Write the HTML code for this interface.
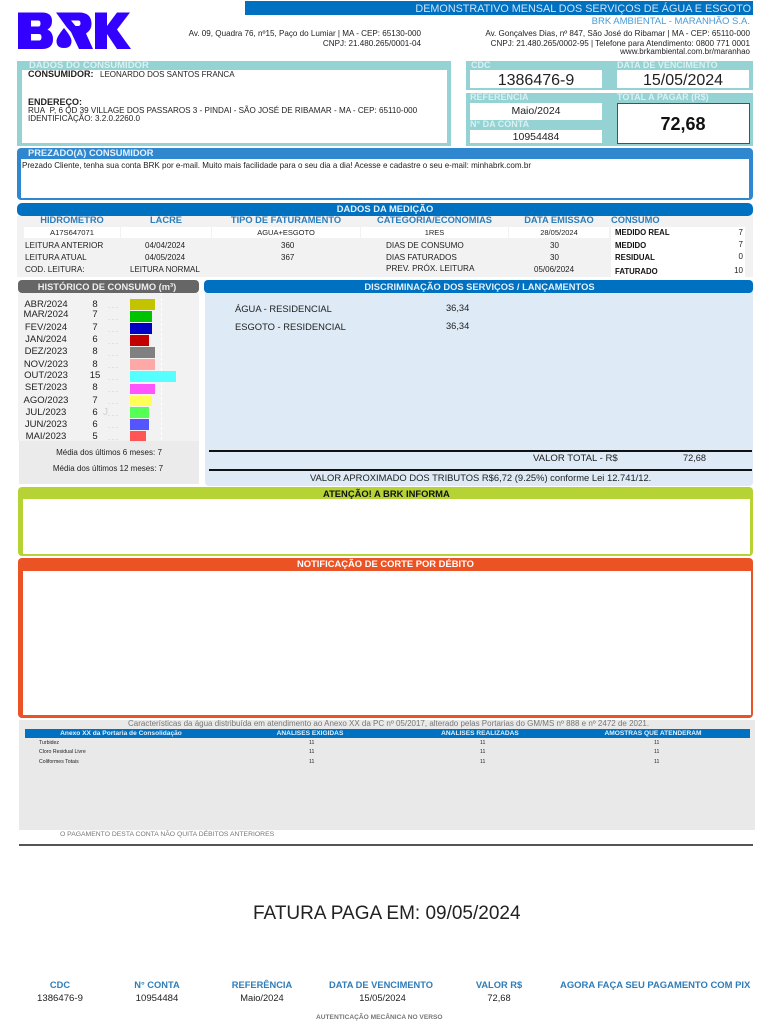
<!DOCTYPE html>
<html><head><meta charset="utf-8"><style>
html,body{margin:0;padding:0;background:#fff}
#p{position:relative;width:768px;height:1024px;overflow:hidden;font-family:"Liberation Sans",Arial,sans-serif;color:#222}
#p div{position:absolute}
.t{white-space:nowrap;line-height:1}
.r{text-align:right}
.c{text-align:center}
.b{font-weight:bold}
.lb{color:#d8f1f1;font-weight:bold}
.h{color:#2e7cb8;font-weight:bold}
.d{left:108px;font-size:7px;letter-spacing:2px;color:#b0b0b0}
</style></head><body><div id="p">
<svg style="position:absolute;left:0;top:0" width="140" height="56" viewBox="0 0 140 56">
<path fill="#3300ff" fill-rule="evenodd" d="M18 12.500H42Q52 12.500 52 21Q52 27 47.500 29.500Q53 32 53 39Q53 49 42 49H18ZM31 20.500V26.500H38.500Q40.500 26.500 40.500 23.500Q40.500 20.500 38.500 20.500ZM31 34V40.500H39Q41.500 40.500 41.500 37.200Q41.500 34 39 34Z"/>
<path fill="#3300ff" fill-rule="evenodd" d="M56 12.500H79Q91.500 12.500 91.500 24Q91.500 30 86 33.500L93 49H79L71 32L66.500 27ZM71 20.500L75.500 26H78Q80.500 26 80.500 23.200Q80.500 20.500 78 20.500Z"/>
<path fill="#3300ff" d="M64 28Q71.500 37 71.500 41Q71.500 48 64 48Q56.500 48 56.500 41Q56.500 37 64 28Z"/>
<path fill="#3300ff" d="M95 12.500H107V26L117 12.500H130L117 29.500L131 49H117L107 34V49H95Z"/>
</svg>

<div style="left:245px;top:1px;width:508px;height:14px;background:#0070c0"></div>
<div class="t r" style="right:17px;top:3.500px;font-size:10.800px;color:#cfe3f5">DEMONSTRATIVO MENSAL DOS SERVIÇOS DE ÁGUA E ESGOTO</div>
<div class="t r" style="right:18px;top:16.500px;font-size:9.500px;color:#4a9bd8">BRK AMBIENTAL - MARANHÃO S.A.</div>
<div class="t r" style="right:347px;top:29.500px;font-size:8.100px">Av. 09, Quadra 76, nº15, Paço do Lumiar | MA - CEP: 65130-000</div>
<div class="t r" style="right:347px;top:39.500px;font-size:8.100px">CNPJ: 21.480.265/0001-04</div>
<div class="t r" style="right:18px;top:29.500px;font-size:8.100px">Av. Gonçalves Dias, nº 847, São José do Ribamar | MA - CEP: 65110-000</div>
<div class="t r" style="right:18px;top:39.500px;font-size:8.100px">CNPJ: 21.480.265/0002-95 | Telefone para Atendimento: 0800 771 0001</div>
<div class="t r" style="right:18px;top:47.500px;font-size:8px">www.brkambiental.com.br/maranhao</div>

<div style="left:17px;top:61px;width:434px;height:85px;background:#95d2d4"></div>
<div style="left:22px;top:70px;width:425px;height:73px;background:#fff"></div>
<div class="t lb" style="left:29px;top:61px;font-size:9.500px">DADOS DO CONSUMIDOR</div>
<div class="t b" style="left:28px;top:69.500px;font-size:9px">CONSUMIDOR:</div>
<div class="t" style="left:100px;top:70.500px;font-size:8px">LEONARDO DOS SANTOS FRANCA</div>
<div class="t b" style="left:28px;top:97.500px;font-size:9px">ENDEREÇO:</div>
<div class="t" style="left:28px;top:106.500px;font-size:8.100px">RUA&nbsp; P, 6 QD 39 VILLAGE DOS PASSAROS 3 - PINDAI - SÃO JOSÉ DE RIBAMAR - MA - CEP: 65110-000</div>
<div class="t" style="left:28px;top:115px;font-size:8.100px">IDENTIFICAÇÃO: 3.2.0.2260.0</div>

<div style="left:466px;top:61px;width:287px;height:29px;background:#95d2d4"></div>
<div style="left:470px;top:70px;width:132px;height:18px;background:#fff"></div>
<div style="left:617px;top:70px;width:132px;height:18px;background:#fff"></div>
<div class="t lb" style="left:471px;top:61px;font-size:9px">CDC</div>
<div class="t lb" style="left:617px;top:61px;font-size:9px">DATA DE VENCIMENTO</div>
<div class="t c" style="left:470px;top:72.500px;width:132px;font-size:16px">1386476-9</div>
<div class="t c" style="left:617px;top:72.500px;width:132px;font-size:16px">15/05/2024</div>

<div style="left:466px;top:93px;width:287px;height:53px;background:#95d2d4"></div>
<div style="left:470px;top:103px;width:132px;height:17px;background:#fff"></div>
<div style="left:470px;top:130px;width:132px;height:13px;background:#fff"></div>
<div style="left:617px;top:103px;background:#fff;border:1px solid #a52a2a;box-sizing:border-box;width:133px;height:41px"></div>
<div class="t lb" style="left:470px;top:93px;font-size:9px">REFERENCIA</div>
<div class="t lb" style="left:617px;top:93px;font-size:9px">TOTAL A PAGAR (R$)</div>
<div class="t lb" style="left:470px;top:120px;font-size:9px">N° DA CONTA</div>
<div class="t c" style="left:470px;top:106px;width:132px;font-size:10.500px">Maio/2024</div>
<div class="t c" style="left:470px;top:131.500px;width:132px;font-size:10.500px">10954484</div>
<div class="t c b" style="left:617px;top:115px;width:132px;font-size:18px;color:#111">72,68</div>

<div style="left:17px;top:148px;width:736px;height:52px;background:#2f88cf;border-radius:4px"></div>
<div style="left:21px;top:159px;width:728px;height:39px;background:#fff"></div>
<div class="t b" style="left:28px;top:149px;font-size:9.300px;color:#e4f1fb">PREZADO(A) CONSUMIDOR</div>
<div class="t" style="left:22px;top:161.500px;font-size:8.050px">Prezado Cliente, tenha sua conta BRK por e-mail. Muito mais facilidade para o seu dia a dia! Acesse e cadastre o seu e-mail: minhabrk.com.br</div>

<div style="left:17px;top:216px;width:736px;height:61px;background:#f2f2f2"></div>
<div style="left:17px;top:203px;width:736px;height:13px;background:#0070c0;border-radius:5px"></div>
<div class="t b c" style="left:17px;top:204px;width:736px;font-size:9.400px;color:#e4f1fb">DADOS DA MEDIÇÃO</div>
<div class="t h c" style="left:24px;top:216px;width:96px;font-size:9.300px">HIDRÔMETRO</div>
<div class="t h c" style="left:121px;top:216px;width:90px;font-size:9.300px">LACRE</div>
<div class="t h c" style="left:212px;top:216px;width:148px;font-size:9.300px">TIPO DE FATURAMENTO</div>
<div class="t h c" style="left:361px;top:216px;width:147px;font-size:9.300px">CATEGORIA/ECONOMIAS</div>
<div class="t h c" style="left:509px;top:216px;width:100px;font-size:9.300px">DATA EMISSÃO</div>
<div class="t h" style="left:611px;top:216px;font-size:9.300px">CONSUMO</div>
<div style="left:24px;top:227px;width:96px;height:11px;background:#fff"></div>
<div style="left:121px;top:227px;width:90px;height:11px;background:#fff"></div>
<div style="left:212px;top:227px;width:148px;height:11px;background:#fff"></div>
<div style="left:361px;top:227px;width:147px;height:11px;background:#fff"></div>
<div style="left:509px;top:227px;width:100px;height:11px;background:#fff"></div>
<div style="left:611px;top:227px;width:134px;height:50px;background:#fff"></div>
<div class="t c" style="left:24px;top:229px;width:96px;font-size:7.600px">A17S647071</div>
<div class="t c" style="left:212px;top:229px;width:148px;font-size:7.500px">AGUA+ESGOTO</div>
<div class="t c" style="left:361px;top:229px;width:147px;font-size:7.500px">1RES</div>
<div class="t c" style="left:509px;top:229px;width:100px;font-size:7.500px">28/05/2024</div>
<div class="t" style="left:25px;top:242px;font-size:8.200px">LEITURA ANTERIOR</div>
<div class="t" style="left:25px;top:254px;font-size:8.200px">LEITURA ATUAL</div>
<div class="t" style="left:25px;top:266px;font-size:8.200px">COD. LEITURA:</div>
<div class="t" style="left:145px;top:242px;font-size:8px">04/04/2024</div>
<div class="t" style="left:145px;top:254px;font-size:8px">04/05/2024</div>
<div class="t" style="left:130px;top:266px;font-size:8px">LEITURA NORMAL</div>
<div class="t" style="left:281px;top:242px;font-size:8px">360</div>
<div class="t" style="left:281px;top:254px;font-size:8px">367</div>
<div class="t" style="left:386px;top:242px;font-size:8.200px">DIAS DE CONSUMO</div>
<div class="t" style="left:386px;top:254px;font-size:8.200px">DIAS FATURADOS</div>
<div class="t" style="left:386px;top:265px;font-size:8.200px">PREV. PRÓX. LEITURA</div>
<div class="t" style="left:550px;top:242px;font-size:8px">30</div>
<div class="t" style="left:550px;top:254px;font-size:8px">30</div>
<div class="t" style="left:534px;top:266px;font-size:8px">05/06/2024</div>
<div class="t b" style="left:615px;top:229px;font-size:7.800px;color:#111">MEDIDO REAL</div>
<div class="t b" style="left:615px;top:242px;font-size:7.800px;color:#111">MEDIDO</div>
<div class="t b" style="left:615px;top:254px;font-size:7.800px;color:#111">RESIDUAL</div>
<div class="t b" style="left:615px;top:268px;font-size:7.800px;color:#111">FATURADO</div>
<div class="t r" style="right:25px;top:229px;font-size:8px">7</div>
<div class="t r" style="right:25px;top:241px;font-size:8px">7</div>
<div class="t r" style="right:25px;top:253px;font-size:8px">0</div>
<div class="t r" style="right:25px;top:267px;font-size:8px">10</div>

<div style="left:18px;top:293px;width:181px;height:148px;background:#f2f2f2"></div>
<div style="left:18px;top:280px;width:181px;height:13px;background:#666;border-radius:4px"></div>
<div class="t b c" style="left:18px;top:282.500px;width:178px;font-size:9.300px;color:#eee">HISTÓRICO DE CONSUMO (m³)</div>
<div style="left:161px;top:293px;height:147px;border-left:1px dashed #fff"></div>
<div style="left:19px;top:441px;width:180px;height:43px;background:#ebebeb"></div>
<div class="t c" style="left:19px;top:449px;width:180px;font-size:8px">Média dos últimos 6 meses: 7</div>
<div class="t c" style="left:18px;top:465px;width:180px;font-size:8px">Média dos últimos 12 meses: 7</div>

<div class="t c" style="left:20px;top:300px;width:52px;font-size:9.500px">ABR/2024</div><div class="t c" style="left:85px;top:300px;width:20px;font-size:9.500px">8</div><div class="t d" style="top:303px">...</div><div style="left:130px;top:299px;width:25px;height:11px;background:#c3c300"></div>
<div class="t c" style="left:20px;top:310px;width:52px;font-size:9.500px">MAR/2024</div><div class="t c" style="left:85px;top:310px;width:20px;font-size:9.500px">7</div><div class="t d" style="top:315px">...</div><div style="left:130px;top:311px;width:22px;height:11px;background:#00c300"></div>
<div class="t c" style="left:20px;top:323px;width:52px;font-size:9.500px">FEV/2024</div><div class="t c" style="left:85px;top:323px;width:20px;font-size:9.500px">7</div><div class="t d" style="top:327px">...</div><div style="left:130px;top:323px;width:22px;height:11px;background:#0000c3"></div>
<div class="t c" style="left:20px;top:335px;width:52px;font-size:9.500px">JAN/2024</div><div class="t c" style="left:85px;top:335px;width:20px;font-size:9.500px">6</div><div class="t d" style="top:339px">...</div><div style="left:130px;top:335px;width:19px;height:11px;background:#c30000"></div>
<div class="t c" style="left:20px;top:347px;width:52px;font-size:9.500px">DEZ/2023</div><div class="t c" style="left:85px;top:347px;width:20px;font-size:9.500px">8</div><div class="t d" style="top:351px">...</div><div style="left:130px;top:347px;width:25px;height:11px;background:#808080"></div>
<div class="t c" style="left:20px;top:360px;width:52px;font-size:9.500px">NOV/2023</div><div class="t c" style="left:85px;top:360px;width:20px;font-size:9.500px">8</div><div class="t d" style="top:363px">...</div><div style="left:130px;top:359px;width:25px;height:11px;background:#ffa8a8"></div>
<div class="t c" style="left:20px;top:371px;width:52px;font-size:9.500px">OUT/2023</div><div class="t c" style="left:85px;top:371px;width:20px;font-size:9.500px">15</div><div class="t d" style="top:375px">...</div><div style="left:130px;top:371px;width:46px;height:11px;background:#55ffff"></div>
<div class="t c" style="left:20px;top:383px;width:52px;font-size:9.500px">SET/2023</div><div class="t c" style="left:85px;top:383px;width:20px;font-size:9.500px">8</div><div class="t d" style="top:387px">...</div><div style="left:130px;top:384px;width:25px;height:10px;background:#ff55ff"></div>
<div class="t c" style="left:20px;top:396px;width:52px;font-size:9.500px">AGO/2023</div><div class="t c" style="left:85px;top:396px;width:20px;font-size:9.500px">7</div><div class="t d" style="top:399px">...</div><div style="left:130px;top:396px;width:22px;height:10px;background:#ffff55"></div>
<div class="t c" style="left:20px;top:408px;width:52px;font-size:9.500px">JUL/2023</div><div class="t c" style="left:85px;top:408px;width:20px;font-size:9.500px">6</div><div class="t d" style="top:411px">...</div><div style="left:130px;top:407px;width:19px;height:11px;background:#55ff55"></div>
<div class="t" style="left:103px;top:408px;font-size:10px;color:#cfcfcf">J</div>
<div class="t c" style="left:20px;top:420px;width:52px;font-size:9.500px">JUN/2023</div><div class="t c" style="left:85px;top:420px;width:20px;font-size:9.500px">6</div><div class="t d" style="top:423px">...</div><div style="left:130px;top:419px;width:19px;height:11px;background:#5555ff"></div>
<div class="t c" style="left:20px;top:432px;width:52px;font-size:9.500px">MAI/2023</div><div class="t c" style="left:85px;top:432px;width:20px;font-size:9.500px">5</div><div class="t d" style="top:435px">...</div><div style="left:130px;top:431px;width:16px;height:10px;background:#ff5555"></div>

<div style="left:205px;top:288px;width:548px;height:198px;background:#deeaf6;border-radius:4px"></div>
<div style="left:204px;top:280px;width:549px;height:13px;background:#0070c0;border-radius:4px"></div>
<div class="t b c" style="left:204px;top:282.500px;width:551px;font-size:9.350px;color:#e4f1fb">DISCRIMINAÇÃO DOS SERVIÇOS / LANÇAMENTOS</div>
<div class="t" style="left:235px;top:304px;font-size:9.400px">ÁGUA - RESIDENCIAL</div>
<div class="t" style="left:235px;top:322px;font-size:9.400px">ESGOTO - RESIDENCIAL</div>
<div class="t" style="left:446px;top:304px;font-size:9.300px">36,34</div>
<div class="t" style="left:446px;top:322px;font-size:9.300px">36,34</div>
<div style="left:209px;top:450px;width:543px;height:2px;background:#111"></div>
<div style="left:209px;top:468.500px;width:543px;height:2px;background:#111"></div>
<div class="t" style="left:533px;top:454px;font-size:9.600px">VALOR TOTAL - R$</div>
<div class="t" style="left:683px;top:454px;font-size:9.200px">72,68</div>
<div class="t" style="left:310px;top:473.500px;font-size:9.380px">VALOR APROXIMADO DOS TRIBUTOS R$6,72 (9.25%) conforme Lei 12.741/12.</div>

<div style="left:18px;top:487px;width:735px;height:69px;background:#b5d334;border-radius:4px"></div>
<div style="left:23px;top:499px;width:727px;height:55px;background:#fff"></div>
<div class="t b" style="left:323px;top:488.500px;font-size:9.400px;color:#111">ATENÇÃO! A BRK INFORMA</div>

<div style="left:18px;top:558px;width:735px;height:160px;background:#eb5324;border-radius:4px"></div>
<div style="left:23px;top:571px;width:728px;height:144px;background:#fff"></div>
<div class="t b" style="left:297px;top:559px;font-size:9.400px;color:#fff">NOTIFICAÇÃO DE CORTE POR DÉBITO</div>

<div style="left:19px;top:720px;width:736px;height:110px;background:#e9e9e9"></div>
<div class="t" style="left:128px;top:719.500px;font-size:8px;color:#777">Características da água distribuída em atendimento ao Anexo XX da PC nº 05/2017, alterado pelas Portarias do GM/MS nº 888 e nº 2472 de 2021.</div>
<div style="left:25px;top:729px;width:725px;height:9px;background:#0070c0"></div>
<div class="t b c" style="left:25px;top:731px;width:192px;font-size:6.600px;color:#e4f1fb">Anexo XX da Portaria de Consolidação</div>
<div class="t b c" style="left:210px;top:731px;width:200px;font-size:6.600px;color:#e4f1fb">ANALISES EXIGIDAS</div>
<div class="t b c" style="left:380px;top:731px;width:200px;font-size:6.600px;color:#e4f1fb">ANALISES REALIZADAS</div>
<div class="t b c" style="left:553px;top:731px;width:200px;font-size:6.600px;color:#e4f1fb">AMOSTRAS QUE ATENDERAM</div>
<div class="t" style="left:39px;top:741px;font-size:5.200px">Turbidez</div>
<div class="t" style="left:39px;top:750px;font-size:5.200px">Cloro Residual Livre</div>
<div class="t" style="left:39px;top:760px;font-size:5.200px">Coliformes Totais</div>
<div class="t" style="left:309px;top:741px;font-size:5.200px">11</div><div class="t" style="left:480px;top:741px;font-size:5.200px">11</div><div class="t" style="left:654px;top:741px;font-size:5.200px">11</div>
<div class="t" style="left:309px;top:750px;font-size:5.200px">11</div><div class="t" style="left:480px;top:750px;font-size:5.200px">11</div><div class="t" style="left:654px;top:750px;font-size:5.200px">11</div>
<div class="t" style="left:309px;top:760px;font-size:5.200px">11</div><div class="t" style="left:480px;top:760px;font-size:5.200px">11</div><div class="t" style="left:654px;top:760px;font-size:5.200px">11</div>
<div class="t" style="left:60px;top:832px;font-size:6.800px;color:#777">O PAGAMENTO DESTA CONTA NÃO QUITA DÉBITOS ANTERIORES</div>
<div style="left:19px;top:843.500px;width:734px;height:2px;background:#555"></div>

<div class="t" style="left:253px;top:904px;font-size:19px;color:#222">FATURA PAGA EM: 09/05/2024</div>

<div class="t h c" style="left:20px;top:981px;width:80px;font-size:9.300px">CDC</div>
<div class="t h c" style="left:117px;top:981px;width:80px;font-size:9.300px">N° CONTA</div>
<div class="t h c" style="left:222px;top:981px;width:80px;font-size:9.300px">REFERÊNCIA</div>
<div class="t h c" style="left:311px;top:981px;width:140px;font-size:9.300px">DATA DE VENCIMENTO</div>
<div class="t h c" style="left:460px;top:981px;width:78px;font-size:9.300px">VALOR R$</div>
<div class="t h" style="left:560px;top:981px;font-size:9.450px">AGORA FAÇA SEU PAGAMENTO COM PIX</div>
<div class="t c" style="left:20px;top:994px;width:80px;font-size:9.600px">1386476-9</div>
<div class="t c" style="left:117px;top:994px;width:80px;font-size:9.600px">10954484</div>
<div class="t c" style="left:222px;top:994px;width:80px;font-size:9.300px">Maio/2024</div>
<div class="t c" style="left:310px;top:994px;width:145px;font-size:9.300px">15/05/2024</div>
<div class="t c" style="left:460px;top:994px;width:78px;font-size:9.300px">72,68</div>
<div class="t b" style="left:316px;top:1014.500px;font-size:6.600px;color:#777">AUTENTICAÇÃO MECÂNICA NO VERSO</div>
</div></body></html>
